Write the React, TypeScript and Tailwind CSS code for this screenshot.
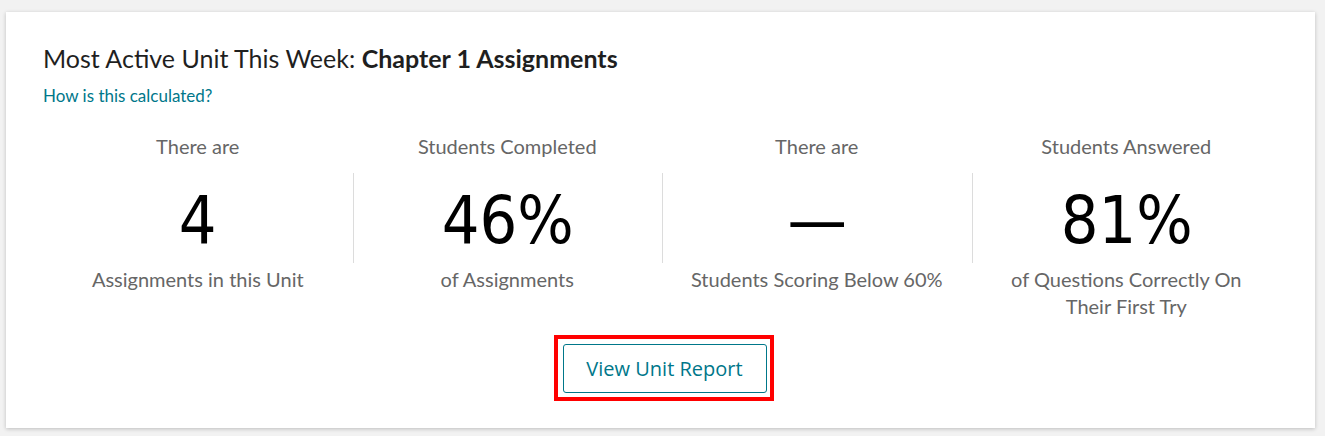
import React from "react";

type Stat = { label: string; value: string; caption: React.ReactNode };

const stats: Stat[] = [
  { label: "There are", value: "4", caption: "Assignments in this Unit" },
  { label: "Students Completed", value: "46%", caption: "of Assignments" },
  { label: "There are", value: "\u2014", caption: "Students Scoring Below 60%" },
  {
    label: "Students Answered",
    value: "81%",
    caption: (
      <>
        of Questions Correctly On
        <br />
        Their First Try
      </>
    ),
  },
];

const textFont = "font-['Lato','Noto_Sans',sans-serif]";

export default function App() {
  return (
    <div className="min-h-[436px] bg-[#f2f2f2] pt-[12px] pl-[6px] pr-[10px]">
      <div className={`bg-white shadow-[0_1px_4px_rgba(0,0,0,0.22)] h-[416px] w-[1309px] pt-[30px] pl-[37px] pr-[34px] ${textFont}`}>
        {/* Heading */}
        <h2 className="text-[25px] leading-[32px] text-[#1f1f1f]">
          Most Active Unit This Week: <span className="font-bold">Chapter 1 Assignments</span>
        </h2>
        <a href="#" className="block mt-[10px] text-[17px] leading-[24px] text-[#00778a] w-fit">
          How is this calculated?
        </a>

        {/* Stats */}
        <div className="grid grid-cols-4 mt-[24px]">
          {stats.map((s, i) => (
            <div key={i} className="flex flex-col items-center text-center">
              <div className="text-[20px] leading-[28px] text-[#666]">{s.label}</div>
              <div
                className={`mt-[13px] h-[90px] w-full flex items-center justify-center ${
                  i > 0 ? "border-l border-[#dcdcdc]" : ""
                }`}
              >
                <span className="font-['DejaVu_Sans_Condensed','DejaVu_Sans',sans-serif] text-[66px] leading-none text-black pt-[6px]">
                  {s.value}
                </span>
              </div>
              <div className="mt-[3px] text-[20px] leading-[27px] text-[#666] whitespace-nowrap">{s.caption}</div>
            </div>
          ))}
        </div>

        {/* Action */}
        <div className="flex justify-center mt-[15px] ml-[3px]">
          <div className="border-4 border-[#ff0000] pt-[5px] pb-[4px] pl-[5px] pr-[3px]">
            <button className="h-[49px] w-[204px] rounded-[3px] border border-[#00778a] bg-white text-[20px] text-[#00778a] font-['Open_Sans',sans-serif]">
              View Unit Report
            </button>
          </div>
        </div>
      </div>
    </div>
  );
}
